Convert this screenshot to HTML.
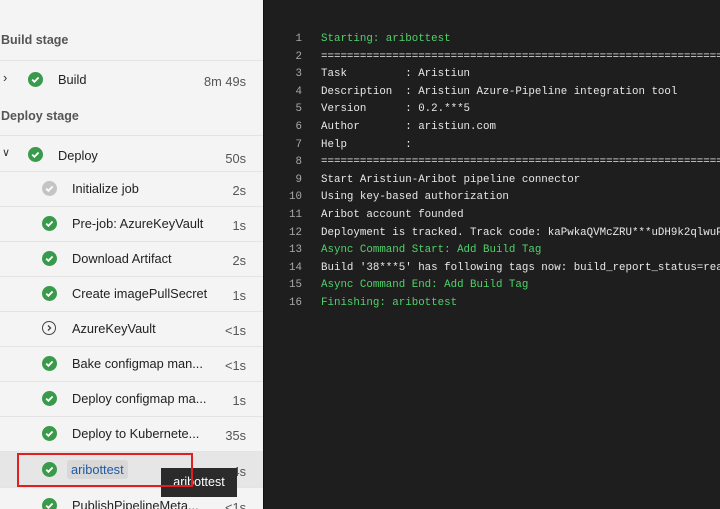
<!DOCTYPE html><html style="overflow:hidden"><head><style>
html,body{margin:0;width:720px;height:509px;overflow:hidden}
body{font-family:"Liberation Sans",sans-serif;background:#1e1e1e;position:relative}
#l{position:absolute;left:0;top:0;width:263px;height:509px;background:#f4f4f4;border-right:1px solid #111;overflow:hidden}
.h{position:absolute;left:1px;font-size:12.5px;font-weight:bold;color:#555}
.r{position:absolute;left:0;width:263px;height:35px;border-bottom:1px solid #e4e4e4;font-size:12.8px;color:#222}
.r .t{position:absolute;top:10px}
.r .d{position:absolute;right:17px;top:12px;color:#555}
.ic{position:absolute;top:10px;width:15px;height:15px;border-radius:50%;background:#3a9a4c}
.ic svg{position:absolute;left:0;top:0}
#c{position:absolute;left:264px;top:0;right:0;bottom:0;font-family:"Liberation Mono",monospace;font-size:10.8px;color:#e8e8e8;overflow:hidden}
.ln{position:absolute;left:0;width:460px;height:17.6px;white-space:pre}
.n{position:absolute;left:0;width:38px;text-align:right;color:#aaa}
.x{position:absolute;left:57px}
.g{color:#4fd26a}
</style></head><body>
<div id="l">
<div class="h" style="top:33px">Build stage</div>
<div class="r" style="top:60px;border-top:1px solid #e4e4e4;height:36px;border-bottom:none"><span style="position:absolute;left:3px;top:9px;font-size:13px;color:#333">&#x203A;</span><div class="ic" style="left:28px;top:11px"><svg width="15" height="15"><path d="M4.2 7.6l2.2 2.2 4.2-4.3" stroke="#fff" stroke-width="1.8" fill="none"/></svg></div><span class="t" style="left:58px;top:11px">Build</span><span class="d" style="top:13px">8m 49s</span></div>
<div class="h" style="top:109px">Deploy stage</div>
<div class="r" style="top:135px;border-top:1px solid #e4e4e4;height:35px"><span style="position:absolute;left:2px;top:10px;font-size:11px;color:#333">&#x2228;</span><div class="ic" style="left:28px;top:11px"><svg width="15" height="15"><path d="M4.2 7.6l2.2 2.2 4.2-4.3" stroke="#fff" stroke-width="1.8" fill="none"/></svg></div><span class="t" style="left:58px;top:12px">Deploy</span><span class="d" style="top:15px">50s</span></div>
<div class="r" style="top:171px"><div class="ic" style="left:42px;background:#c4c4c4"><svg width="15" height="15"><path d="M4.2 7.6l2.2 2.2 4.2-4.3" stroke="#fff" stroke-width="1.8" fill="none"/></svg></div><span class="t" style="left:72px">Initialize job</span><span class="d">2s</span></div>
<div class="r" style="top:206px"><div class="ic" style="left:42px"><svg width="15" height="15"><path d="M4.2 7.6l2.2 2.2 4.2-4.3" stroke="#fff" stroke-width="1.8" fill="none"/></svg></div><span class="t" style="left:72px">Pre-job: AzureKeyVault</span><span class="d">1s</span></div>
<div class="r" style="top:241px"><div class="ic" style="left:42px"><svg width="15" height="15"><path d="M4.2 7.6l2.2 2.2 4.2-4.3" stroke="#fff" stroke-width="1.8" fill="none"/></svg></div><span class="t" style="left:72px">Download Artifact</span><span class="d">2s</span></div>
<div class="r" style="top:276px"><div class="ic" style="left:42px"><svg width="15" height="15"><path d="M4.2 7.6l2.2 2.2 4.2-4.3" stroke="#fff" stroke-width="1.8" fill="none"/></svg></div><span class="t" style="left:72px">Create imagePullSecret</span><span class="d">1s</span></div>
<div class="r" style="top:311px"><div class="ic" style="left:42px;background:none;border:1.3px solid #444;width:12px;height:12px"><svg width="12" height="12"><path d="M5 3.5l2.5 2.5-2.5 2.5" stroke="#444" stroke-width="1.3" fill="none"/></svg></div><span class="t" style="left:72px">AzureKeyVault</span><span class="d">&lt;1s</span></div>
<div class="r" style="top:346px"><div class="ic" style="left:42px"><svg width="15" height="15"><path d="M4.2 7.6l2.2 2.2 4.2-4.3" stroke="#fff" stroke-width="1.8" fill="none"/></svg></div><span class="t" style="left:72px">Bake configmap man...</span><span class="d">&lt;1s</span></div>
<div class="r" style="top:381px"><div class="ic" style="left:42px"><svg width="15" height="15"><path d="M4.2 7.6l2.2 2.2 4.2-4.3" stroke="#fff" stroke-width="1.8" fill="none"/></svg></div><span class="t" style="left:72px">Deploy configmap ma...</span><span class="d">1s</span></div>
<div class="r" style="top:416px"><div class="ic" style="left:42px"><svg width="15" height="15"><path d="M4.2 7.6l2.2 2.2 4.2-4.3" stroke="#fff" stroke-width="1.8" fill="none"/></svg></div><span class="t" style="left:72px">Deploy to Kubernete...</span><span class="d">35s</span></div>
<div class="r" style="top:452px;background:#e6e6e6"><div class="ic" style="left:42px"><svg width="15" height="15"><path d="M4.2 7.6l2.2 2.2 4.2-4.3" stroke="#fff" stroke-width="1.8" fill="none"/></svg></div><span class="t" style="left:67px;top:8px;background:#d8d8d8;color:#1f5aa0;padding:2px 4px;border-radius:3px">aribottest</span><span class="d">4s</span></div>
<div class="r" style="top:488px"><div class="ic" style="left:42px"><svg width="15" height="15"><path d="M4.2 7.6l2.2 2.2 4.2-4.3" stroke="#fff" stroke-width="1.8" fill="none"/></svg></div><span class="t" style="left:72px">PublishPipelineMeta...</span><span class="d">&lt;1s</span></div>
<div style="position:absolute;left:161px;top:468px;width:76px;height:29px;background:#2b2b2b;color:#fff;font-size:12.5px;line-height:29px;text-align:center">aribottest</div>
<div style="position:absolute;left:17px;top:453px;width:172px;height:30px;border:2px solid #e02020"></div>
</div>
<div id="c">
<div class="ln" style="top:33px"><span class="n">1</span><span class="x g">Starting: aribottest</span></div>
<div class="ln" style="top:50.6px"><span class="n">2</span><span class="x">==========================================================================</span></div>
<div class="ln" style="top:68.2px"><span class="n">3</span><span class="x">Task         : Aristiun</span></div>
<div class="ln" style="top:85.8px"><span class="n">4</span><span class="x">Description  : Aristiun Azure-Pipeline integration tool</span></div>
<div class="ln" style="top:103.4px"><span class="n">5</span><span class="x">Version      : 0.2.***5</span></div>
<div class="ln" style="top:121px"><span class="n">6</span><span class="x">Author       : aristiun.com</span></div>
<div class="ln" style="top:138.6px"><span class="n">7</span><span class="x">Help         :</span></div>
<div class="ln" style="top:156.2px"><span class="n">8</span><span class="x">==========================================================================</span></div>
<div class="ln" style="top:173.8px"><span class="n">9</span><span class="x">Start Aristiun-Aribot pipeline connector</span></div>
<div class="ln" style="top:191.4px"><span class="n">10</span><span class="x">Using key-based authorization</span></div>
<div class="ln" style="top:209px"><span class="n">11</span><span class="x">Aribot account founded</span></div>
<div class="ln" style="top:226.6px"><span class="n">12</span><span class="x">Deployment is tracked. Track code: kaPwkaQVMcZRU***uDH9k2qlwuPe</span></div>
<div class="ln" style="top:244.2px"><span class="n">13</span><span class="x g">Async Command Start: Add Build Tag</span></div>
<div class="ln" style="top:261.8px"><span class="n">14</span><span class="x">Build '38***5' has following tags now: build_report_status=ready</span></div>
<div class="ln" style="top:279.4px"><span class="n">15</span><span class="x g">Async Command End: Add Build Tag</span></div>
<div class="ln" style="top:297px"><span class="n">16</span><span class="x g">Finishing: aribottest</span></div>
</div>
</body></html>
